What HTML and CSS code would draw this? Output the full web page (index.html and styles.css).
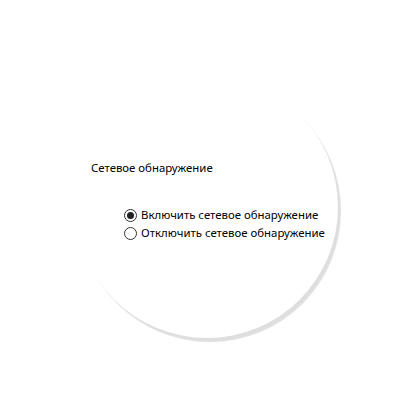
FILE: index.html
```html
<!DOCTYPE html>
<html>
<head>
<meta charset="utf-8">
<link rel="stylesheet" href="styles.css">
</head>
<body>
<div class="circle">
  <div class="title">Сетевое обнаружение</div>
  <div class="options">
    <label class="opt"><span class="radio checked"></span>Включить сетевое обнаружение</label>
    <label class="opt"><span class="radio"></span>Отключить сетевое обнаружение</label>
  </div>
</div>
</body>
</html>
```
FILE: styles.css
```css
html, body {
  margin: 0;
  padding: 0;
  background: #fff;
}
body {
  width: 410px;
  height: 410px;
  overflow: hidden;
  font-family: "Noto Sans", "Open Sans", sans-serif;
  font-size: 11.4px;
  color: #000;
}
.circle {
  margin: 76px 0 0 76px;
  width: 262px;
  height: 262px;
  border-radius: 50%;
  background: #fff;
  box-shadow: 3px 4px 1px rgba(0, 0, 0, 0.13);
  box-sizing: border-box;
  padding: 84px 0 0 15px;
}
.title {
  line-height: 16px;
  height: 16px;
}
.options {
  margin: 30px 0 0 33px;
  display: flex;
  flex-direction: column;
}
.opt {
  display: flex;
  align-items: center;
  height: 18px;
  line-height: 18px;
  white-space: nowrap;
}
.radio {
  width: 11px;
  height: 11px;
  border: 1px solid #333;
  border-radius: 50%;
  box-sizing: content-box;
  margin-right: 4px;
  position: relative;
  background: #fff;
}
.radio.checked::after {
  content: "";
  position: absolute;
  left: 2px;
  top: 2px;
  width: 7px;
  height: 7px;
  border-radius: 50%;
  background: #222;
}
```
